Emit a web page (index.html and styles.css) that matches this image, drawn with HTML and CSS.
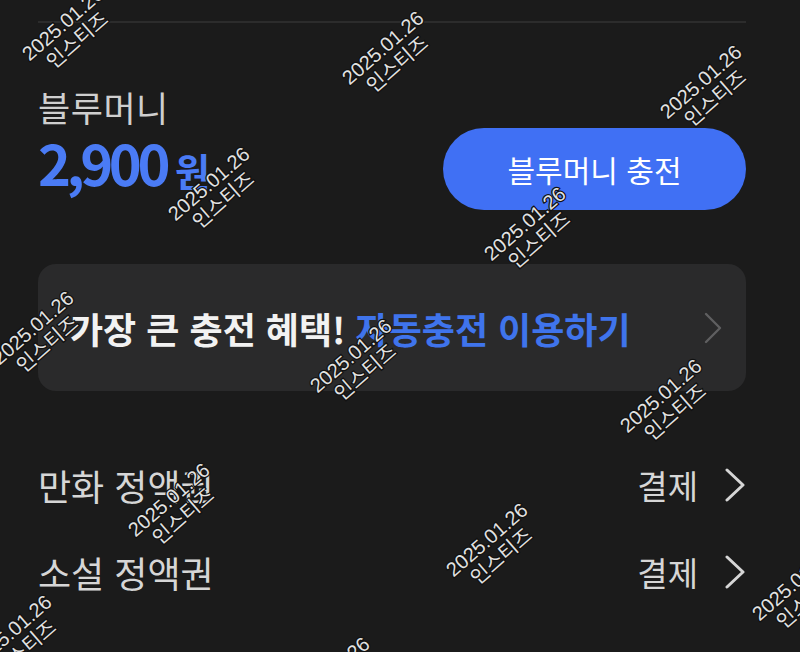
FILE: index.html
```html
<!DOCTYPE html>
<html lang="ko">
<head>
    <meta charset="UTF-8">
    <title>블루머니</title>
    <link rel="stylesheet" href="styles.css">
</head>
<body>
    <div class="page">
        <div class="divider"></div>

        <div class="balance">
            <div class="balance-info">
                <div class="balance-label">블루머니</div>
                <div class="balance-amount">
                    <span class="amount-num">2,900</span><span class="amount-unit">원</span>
                </div>
            </div>
            <button class="charge-btn">블루머니 충전</button>
        </div>

        <div class="promo">
            <span class="promo-text">가장 큰 충전 혜택! <em>자동충전 이용하기</em></span>
            <svg class="promo-arrow" width="18" height="32" viewBox="0 0 18 32">
                <polyline points="2,2 16,16 2,30" fill="none" stroke="#5f5f60" stroke-width="2.4" stroke-linecap="round" stroke-linejoin="round"/>
            </svg>
        </div>

        <div class="plans">
            <div class="plan-row">
                <span class="plan-name">만화 정액권</span>
                <span class="plan-action">결제
                    <svg width="22" height="34" viewBox="0 0 22 34">
                        <polyline points="3,2 19,17 3,32" fill="none" stroke="#d6d6d6" stroke-width="3" stroke-linecap="round" stroke-linejoin="round"/>
                    </svg>
                </span>
            </div>
            <div class="plan-row">
                <span class="plan-name">소설 정액권</span>
                <span class="plan-action">결제
                    <svg width="22" height="34" viewBox="0 0 22 34">
                        <polyline points="3,2 19,17 3,32" fill="none" stroke="#d6d6d6" stroke-width="3" stroke-linecap="round" stroke-linejoin="round"/>
                    </svg>
                </span>
            </div>
        </div>
    </div>

    <!-- 워터마크 -->
    <div class="wm-layer">
        <div class="wm" style="left:70px; top:32px">2025.01.26<br>인스티즈</div>
        <div class="wm" style="left:390px; top:56px">2025.01.26<br>인스티즈</div>
        <div class="wm" style="left:708px; top:90px">2025.01.26<br>인스티즈</div>
        <div class="wm" style="left:216px; top:192px">2025.01.26<br>인스티즈</div>
        <div class="wm" style="left:532px; top:232px">2025.01.26<br>인스티즈</div>
        <div class="wm" style="left:40px; top:336px">2025.01.26<br>인스티즈</div>
        <div class="wm" style="left:358px; top:364px">2025.01.26<br>인스티즈</div>
        <div class="wm" style="left:668px; top:404px">2025.01.26<br>인스티즈</div>
        <div class="wm" style="left:176px; top:508px">2025.01.26<br>인스티즈</div>
        <div class="wm" style="left:494px; top:548px">2025.01.26<br>인스티즈</div>
        <div class="wm" style="left:800px; top:592px">2025.01.26<br>인스티즈</div>
        <div class="wm" style="left:18px; top:640px">2025.01.26<br>인스티즈</div>
        <div class="wm" style="left:336px; top:682px">2025.01.26<br>인스티즈</div>
    </div>
</body>
</html>
```

FILE: styles.css
```css
body {
    margin: 0;
    background-color: #1b1b1b;
    font-family: "Noto Sans CJK KR", "Noto Sans", sans-serif;
    color: #d8d8d8;
    overflow: hidden;
    height: 652px;
    position: relative;
}

.page {
    padding: 0 54px 0 38px;
}

.divider {
    margin-top: 21px;
    height: 2px;
    background-color: #2c2c2c;
}

.balance {
    display: flex;
    justify-content: space-between;
    align-items: flex-end;
    margin-top: 64px;
}

.balance-label {
    font-size: 35px;
    line-height: 40px;
    letter-spacing: 0.5px;
    color: #cfcfcf;
}

.balance-amount {
    display: flex;
    align-items: baseline;
    color: #4a7bf5;
    margin-top: 6px;
    line-height: 58px;
}

.amount-num {
    font-size: 56px;
    font-weight: 700;
    letter-spacing: -4.5px;
}

.amount-unit {
    font-size: 38px;
    font-weight: 700;
    margin-left: 9px;
}

.charge-btn {
    width: 303px;
    height: 82px;
    border: none;
    border-radius: 41px;
    background-color: #4070f4;
    color: #ffffff;
    font-family: inherit;
    font-size: 30px;
    margin-bottom: -11px; /* 버튼이 금액보다 아래로 내려옴 */
}

.promo {
    margin-top: 65px;
    height: 127px;
    background-color: #2a2a2b;
    border-radius: 18px;
    display: flex;
    align-items: center;
    justify-content: space-between;
    padding: 0 24px 0 32px;
}

.promo-text {
    font-size: 36px;
    font-weight: 700;
    color: #f2f2f2;
}

.promo-text em {
    font-style: normal;
    color: #3f74ec;
}

.plans {
    margin-top: 50px;
}

.plan-row {
    display: flex;
    justify-content: space-between;
    align-items: center;
    height: 87px;
    font-size: 36px;
    color: #d6d6d6;
}

.plan-action {
    display: flex;
    align-items: center;
    gap: 26px;
    font-size: 33px;
}

.wm-layer {
    position: absolute;
    inset: 0;
    overflow: hidden;
    pointer-events: none;
}

.wm {
    position: absolute;
    transform: translate(-50%, -50%) rotate(-41deg);
    font-family: "Liberation Sans", "Noto Sans CJK KR", sans-serif;
    font-size: 20px;
    line-height: 22px;
    text-align: center;
    white-space: nowrap;
    color: #e2e2e2;
    -webkit-text-stroke: 2.5px #111;
    paint-order: stroke fill;
}
```
